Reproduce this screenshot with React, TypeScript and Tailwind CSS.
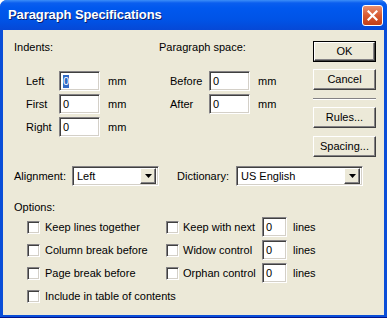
import React from "react";

const font = { fontFamily: '"Liberation Sans", Arial, sans-serif' };

function Input({ w, value = "0", selected = false }: { w: string; value?: string; selected?: boolean }) {
  return (
    <div
      className={`${w} h-[20px] bg-white border-t border-l border-t-[#848284] border-l-[#848284] border-b border-r border-b-white border-r-white shadow-[inset_1px_1px_0_#404040,inset_-1px_-1px_0_#D4D0C8] flex items-center pl-[3px] text-[11px] leading-[13px]`}
    >
      {selected ? <span className="bg-[#316AC5] text-white px-0">{value}</span> : <span>{value}</span>}
    </div>
  );
}

function Button({ label, def = false }: { label: string; def?: boolean }) {
  return (
    <div
      className={`w-[63px] h-[21px] flex items-center justify-center text-[11px] ${
        def ? "border border-black" : ""
      }`}
    >
      <div className="w-full h-full flex items-center justify-center bg-[#ECE9D8] border-t border-l border-t-white border-l-white border-b border-r border-b-[#404040] border-r-[#404040] shadow-[inset_-1px_-1px_0_#848284]">
        {label}
      </div>
    </div>
  );
}

function Checkbox() {
  return (
    <div className="w-[13px] h-[13px] bg-white border-t border-l border-t-[#848284] border-l-[#848284] border-b border-r border-b-white border-r-white shadow-[inset_1px_1px_0_#404040,inset_-1px_-1px_0_#D4D0C8] shrink-0" />
  );
}

function Select({ w, value }: { w: string; value: string }) {
  return (
    <div
      className={`${w} h-[20px] bg-white border-t border-l border-t-[#848284] border-l-[#848284] border-b border-r border-b-white border-r-white shadow-[inset_1px_1px_0_#404040,inset_-1px_-1px_0_#D4D0C8] flex items-center p-[2px]`}
    >
      <span className="flex-1 pl-[2px] text-[11px] leading-[13px]">{value}</span>
      <div className="w-[16px] h-[16px] bg-[#ECE9D8] border-t border-l border-t-white border-l-white border-b border-r border-b-[#404040] border-r-[#404040] shadow-[inset_-1px_-1px_0_#848284] flex items-center justify-center">
        <svg width="7" height="4" viewBox="0 0 7 4">
          <path d="M0 0H7L3.5 4Z" fill="#000" />
        </svg>
      </div>
    </div>
  );
}

export default function App() {
  return (
    <div style={font} className="w-[387px] h-[318px] bg-white">
      <div className="w-[387px] h-[318px] flex flex-col rounded-t-[7px] bg-[#0A4ED8] px-[3px] pb-[3px] shadow-[inset_0_-1px_0_#00138C]">
        {/* Title bar */}
        <div className="h-[30px] -mx-[3px] rounded-t-[7px] bg-[linear-gradient(to_bottom,#3C8EF8_0px,#0A5EEF_3px,#0058EE_8px,#0053E6_20px,#0648D6_30px)] flex items-center pl-[8px] pr-[4px]">
          <span className="text-white font-bold text-[13px] leading-[16px] tracking-[-0.1px] [text-shadow:1px_1px_0_#0A1F6E] flex-1">
            Paragraph Specifications
          </span>
          <div className="w-[21px] h-[21px] rounded-[3px] border border-white bg-[linear-gradient(to_bottom,#E9906F,#D85B32_50%,#C23E16)] flex items-center justify-center mt-[1px]">
            <svg width="11" height="11" viewBox="0 0 11 11">
              <path d="M1.5 1.5L9.5 9.5M9.5 1.5L1.5 9.5" stroke="#fff" strokeWidth="2.2" strokeLinecap="square" />
            </svg>
          </div>
        </div>

        {/* Body */}
        <div className="flex-1 bg-[#ECE9D8] pl-[11px] pt-[11px] text-[11px] leading-[13px] text-black whitespace-nowrap">
          <div className="flex">
            {/* Left */}
            <div className="flex w-[299px]">
              <div className="w-[145px] flex flex-col">
                <div className="h-[13px] leading-[13px]">Indents:</div>
                <div className="mt-[17px] flex flex-col gap-[3px] pl-[12px]">
                  {["Left", "First", "Right"].map((l, i) => (
                    <div key={l} className="flex items-center h-[20px]">
                      <span className="w-[33px]">{l}</span>
                      <Input w="w-[41px]" selected={i === 0} />
                      <span className="ml-[8px]">mm</span>
                    </div>
                  ))}
                </div>
              </div>
              <div className="flex flex-col">
                <div className="h-[13px] leading-[13px]">Paragraph space:</div>
                <div className="mt-[17px] flex flex-col gap-[3px] pl-[11px]">
                  {["Before", "After"].map((l) => (
                    <div key={l} className="flex items-center h-[20px]">
                      <span className="w-[39px]">{l}</span>
                      <Input w="w-[41px]" />
                      <span className="ml-[8px]">mm</span>
                    </div>
                  ))}
                </div>
              </div>
            </div>
            {/* Buttons */}
            <div className="flex flex-col">
              <Button label="OK" def />
              <div className="mt-[7px]">
                <Button label="Cancel" />
              </div>
              <div className="mt-[8px] h-[2px] w-[63px] border-t border-t-[#848284] border-b border-b-white" />
              <div className="mt-[7px]">
                <Button label="Rules..." />
              </div>
              <div className="mt-[8px]">
                <Button label="Spacing..." />
              </div>
            </div>
          </div>

          {/* Alignment / Dictionary */}
          <div className="flex items-center mt-[9px]">
            <span className="w-[58px]">Alignment:</span>
            <Select w="w-[87px]" value="Left" />
            <span className="ml-[18px] w-[59px]">Dictionary:</span>
            <Select w="w-[127px]" value="US English" />
          </div>

          {/* Options */}
          <div className="mt-[15px] h-[13px] leading-[13px]">Options:</div>
          <div className="mt-[3px] flex pl-[13px]">
            <div className="w-[139px] flex flex-col gap-[3px]">
              {["Keep lines together", "Column break before", "Page break before"].map((l) => (
                <div key={l} className="flex items-center h-[20px] gap-[5px]">
                  <Checkbox />
                  <span>{l}</span>
                </div>
              ))}
            </div>
            <div className="flex flex-col gap-[3px]">
              {["Keep with next", "Widow control", "Orphan control"].map((l) => (
                <div key={l} className="flex items-center h-[20px]">
                  <Checkbox />
                  <span className="ml-[4px] w-[79px]">{l}</span>
                  <Input w="w-[25px]" />
                  <span className="ml-[6px]">lines</span>
                </div>
              ))}
            </div>
          </div>
          <div className="mt-[3px] pl-[13px] flex items-center h-[20px] gap-[5px]">
            <Checkbox />
            <span>Include in table of contents</span>
          </div>
        </div>
      </div>
    </div>
  );
}
